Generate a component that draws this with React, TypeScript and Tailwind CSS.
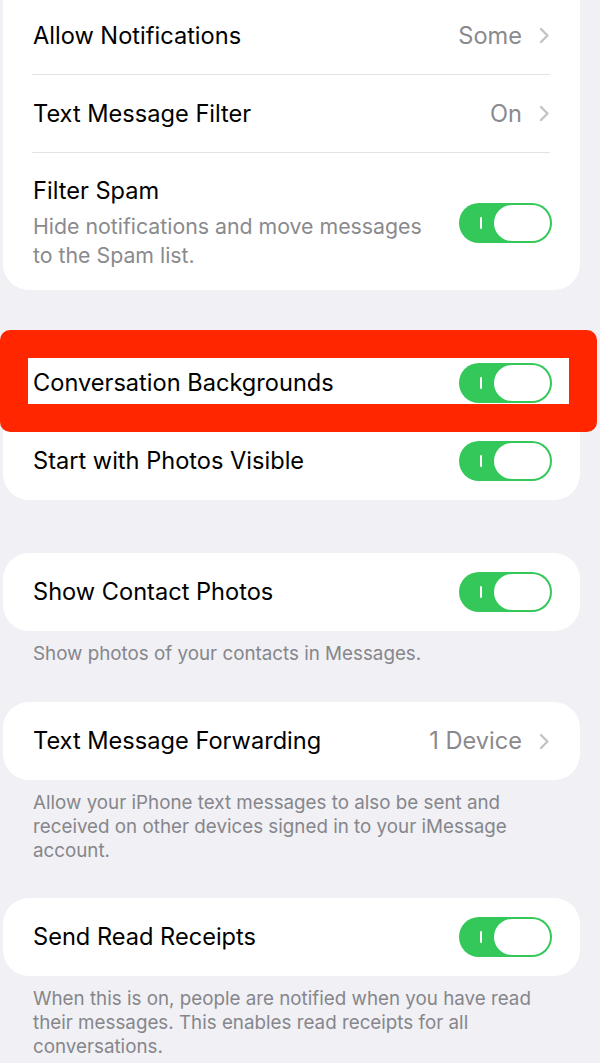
import React from 'react';

// iOS-style Messages settings
const Toggle = () => (
  <div className="flex h-[40px] w-[93px] shrink-0 items-center rounded-full bg-[#34C759] pl-[21px] pr-[2px]">
    <span className="h-[12px] w-[2px] rounded-full bg-white" />
    <span className="ml-auto h-[36px] w-[56px] rounded-full bg-white" />
  </div>
);

const Chevron = () => (
  <svg width="11" height="17" viewBox="0 0 11 17" className="shrink-0">
    <path d="M2 2 L8.5 8.5 L2 15" fill="none" stroke="#C4C4C7" strokeWidth="2.4" strokeLinecap="round" strokeLinejoin="round" />
  </svg>
);

const Separator = () => <div className="ml-[29px] mr-[30px] h-px bg-[#E3E3E6]" />;

const ValueRow = ({ label, value, tall = true }: { label: string; value: string; tall?: boolean }) => (
  <div className={`flex items-center justify-between pl-[30px] pr-[30px] ${tall ? 'h-[78px]' : 'h-[77px]'}`}>
    <span className="text-[23.6px] text-black">{label}</span>
    <div className="flex items-center gap-[17px]">
      <span className="text-[23.6px] text-[#8A8A8E]">{value}</span>
      <Chevron />
    </div>
  </div>
);

const ToggleRow = ({ label }: { label: string }) => (
  <div className="flex h-[78px] items-center justify-between pl-[30px] pr-[28px]">
    <span className="text-[23.6px] text-black">{label}</span>
    <Toggle />
  </div>
);

const Footer = ({ children }: { children: React.ReactNode }) => (
  <p className="mt-[11px] pl-[30px] pr-[30px] text-[18.8px] leading-[24px] text-[#86868B]">{children}</p>
);

export default function App() {
  return (
    <div className="h-[1063px] w-[600px] overflow-hidden bg-[#F0F0F5] pl-[3px] pr-[20px] font-['Inter',sans-serif] leading-[30px] antialiased">
      {/* Notifications card */}
      <div className="-mt-[3px] rounded-b-[26px] bg-white">
        <ValueRow label="Allow Notifications" value="Some" tall={false} />
        <Separator />
        <ValueRow label="Text Message Filter" value="On" tall={false} />
        <Separator />
        <div className="flex items-center justify-between pt-[23px] pb-[20px] pl-[30px] pr-[28px]">
          <div>
            <div className="text-[23.6px] text-black">Filter Spam</div>
            <div className="mt-[6px] text-[21.3px] leading-[29px] text-[#8A8A8E]">
              Hide notifications and move messages
              <br />
              to the Spam list.
            </div>
          </div>
          <Toggle />
        </div>
      </div>

      {/* Photos card with highlight */}
      <div className="relative mt-[54px] rounded-[26px] bg-white">
        <ToggleRow label="Conversation Backgrounds" />
        <ToggleRow label="Start with Photos Visible" />
        <div className="absolute -left-[3px] -top-[14px] h-[102px] w-[597px] rounded-[10px] border-[28px] border-[#FF2600]" />
      </div>

      <div className="mt-[53px] rounded-[26px] bg-white">
        <ToggleRow label="Show Contact Photos" />
      </div>
      <Footer>Show photos of your contacts in Messages.</Footer>

      <div className="mt-[36px] rounded-[26px] bg-white">
        <ValueRow label="Text Message Forwarding" value="1 Device" />
      </div>
      <Footer>
        Allow your iPhone text messages to also be sent and
        <br />
        received on other devices signed in to your iMessage
        <br />
        account.
      </Footer>

      <div className="mt-[35px] rounded-[26px] bg-white">
        <ToggleRow label="Send Read Receipts" />
      </div>
      <Footer>
        When this is on, people are notified when you have read
        <br />
        their messages. This enables read receipts for all
        <br />
        conversations.
      </Footer>
    </div>
  );
}
